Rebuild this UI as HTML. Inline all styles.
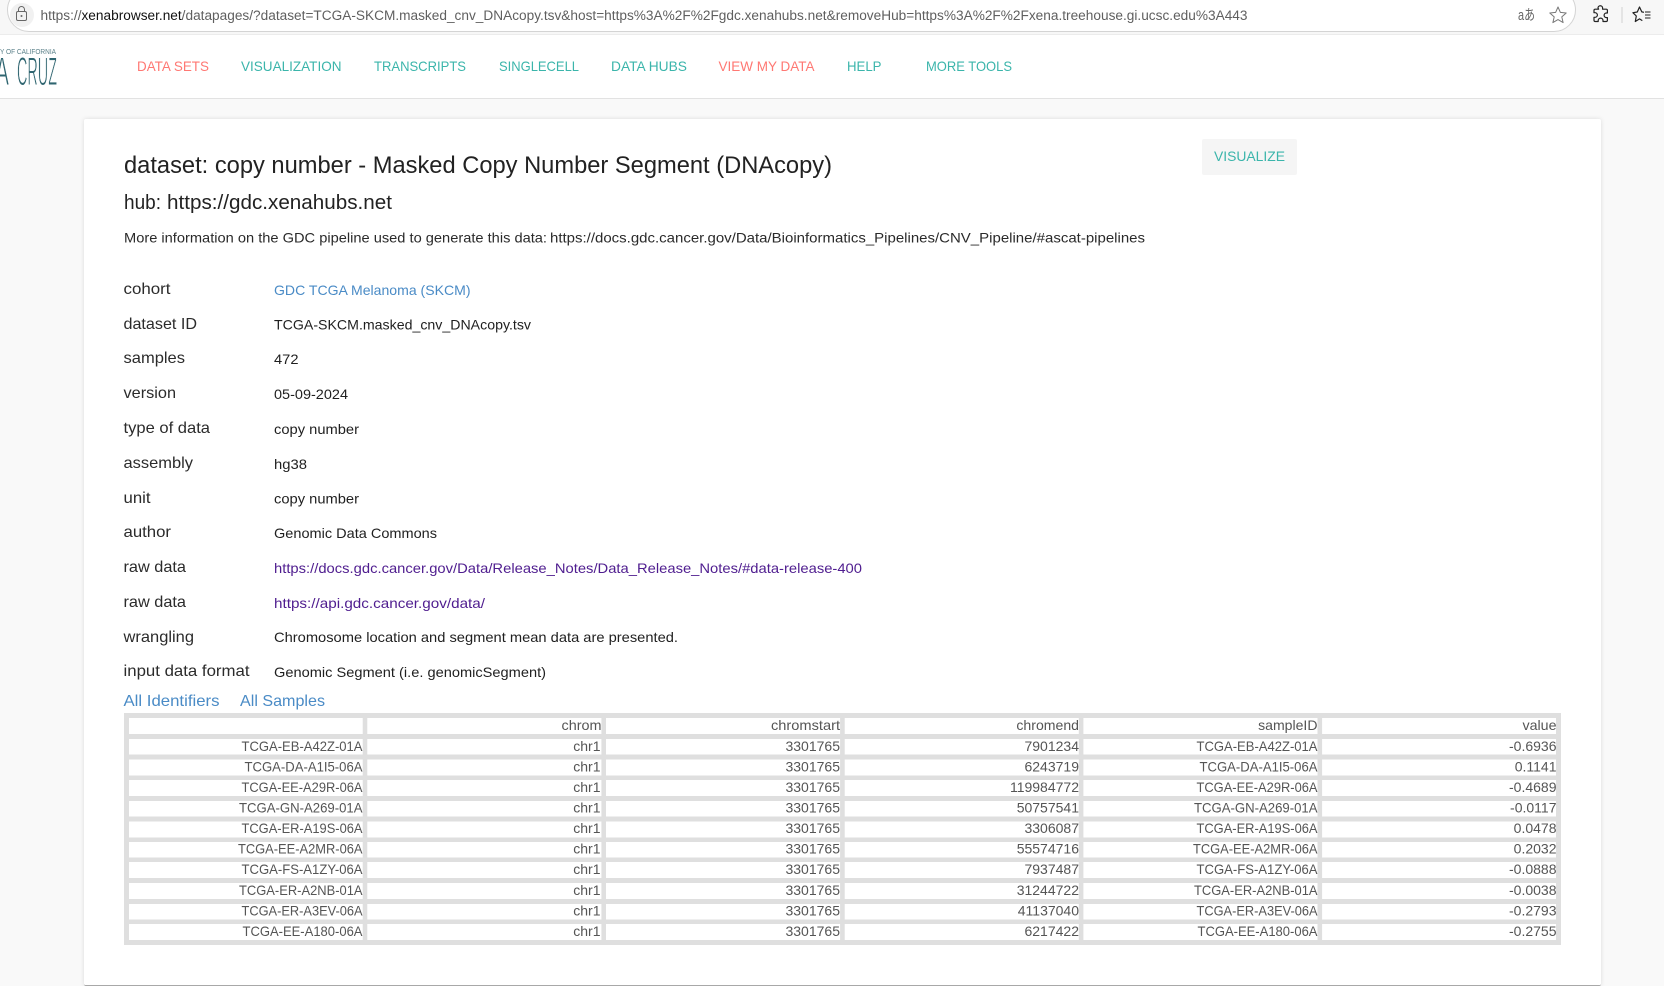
<!DOCTYPE html>
<html lang="en">
<head>
<meta charset="utf-8">
<title>Xena dataset</title>
<style>
html,body{margin:0;padding:0;width:1664px;height:986px;overflow:hidden;background:#f9f9f9}
#tb{position:absolute;left:0;top:0;width:1664px;height:34px;background:#f7f7f7;border-bottom:1px solid #ececec}
#omni{position:absolute;left:7px;top:-12px;width:1567px;height:42px;background:#fff;border:1px solid #d4d4d4;border-radius:22px}
#nav{position:absolute;left:0;top:35px;width:1664px;height:63px;background:#fff;border-bottom:1px solid #e2e2e2}
#card{position:absolute;left:84px;top:119px;width:1517px;height:866px;background:#fff;border-radius:2px;border-bottom:1px solid #a8a8a8;box-shadow:0 0 5px rgba(0,0,0,.12)}
#btn{position:absolute;left:1202px;top:139px;width:95px;height:36px;background:#f5f5f5;border-radius:2px}
svg{position:absolute;left:0;top:0}
text{font-family:"Liberation Sans","Noto Sans CJK JP",sans-serif;font-size:14px;fill:#222}
.n{fill:#3bb5ab}.c{fill:#ff7873}
.l{font-size:16px;fill:#2b2b2b}
.v{font-size:14px;fill:#1f1f1f}
.b{fill:#4a8bc6}.p{fill:#4f1d8f}
.t text{fill:#555;text-anchor:end}
.logo{font-size:40px;fill:#2f6570;stroke:#fff;stroke-width:.9px}
</style>
</head>
<body>
<div id="tb"></div><div id="omni"></div><div id="nav"></div><div id="card"></div><div id="btn"></div>
<svg width="1664" height="986" viewBox="0 0 1664 986" xmlns="http://www.w3.org/2000/svg">
<!-- browser chrome -->
<circle cx="22" cy="15" r="12" fill="#f1f1f1"/>
<g fill="none" stroke="#666" stroke-width="1">
<rect x="16.5" y="11.5" width="10" height="9" rx="1.5"/>
<path d="M18.5 11.5V9.5a3 3 0 0 1 6 0v2"/>
</g>
<circle cx="21.5" cy="16" r="1" fill="#666"/>
<text x="40.5" y="20" textLength="1207" lengthAdjust="spacingAndGlyphs" style="font-size:13.5px;fill:#5f5f5f">https://<tspan style="fill:#111">xenabrowser.net</tspan>/datapages/?dataset=TCGA-SKCM.masked_cnv_DNAcopy.tsv&amp;host=https%3A%2F%2Fgdc.xenahubs.net&amp;removeHub=https%3A%2F%2Fxena.treehouse.gi.ucsc.edu%3A443</text>
<text x="1518" y="20" style="font-size:14.5px;fill:#666" textLength="17" lengthAdjust="spacingAndGlyphs">aあ</text>
<path d="M1558 7l2.4 5.4 5.8.6-4.4 3.9 1.3 5.7-5.1-3-5.1 3 1.3-5.7-4.4-3.9 5.8-.6z" fill="none" stroke="#777" stroke-width="1" stroke-linejoin="round"/>
<path d="M1598 8.5a2.3 2.3 0 0 1 4.6 0v1.2h3.6a1.2 1.2 0 0 1 1.2 1.2v2.6h-1a2.3 2.3 0 0 0 0 4.6h1v2.7a1.2 1.2 0 0 1-1.2 1.2h-3.2v-1a2.4 2.4 0 0 0-4.8 0v1h-3a1.2 1.2 0 0 1-1.2-1.2v-3h1.1a2.3 2.3 0 0 0 0-4.6h-1.1v-2.3a1.2 1.2 0 0 1 1.2-1.2h3.4z" fill="none" stroke="#222" stroke-width="1.2" stroke-linejoin="round" transform="translate(0,-.5)"/>
<rect x="1621.5" y="7" width="1" height="16" fill="#d2d2d2"/>
<path d="M1644 12.3l-2.2-.4-2.3-4.9-2.2 5-4.4.7 3.4 3.3-1 5.5 4.2-2.6 2.8 1.7" fill="none" stroke="#222" stroke-width="1.2" stroke-linejoin="round"/>
<path d="M1645 12h5.5M1645 15h5.5M1645 18h5.5" stroke="#222" stroke-width="1.1"/>

<!-- logo -->
<text x="0" y="54" textLength="56" lengthAdjust="spacingAndGlyphs" style="font-size:7.5px;fill:#5b8089">Y OF CALIFORNIA</text>
<text class="logo" x="-5" y="85" textLength="14" lengthAdjust="spacingAndGlyphs">A</text>
<text class="logo" x="17" y="85" textLength="40" lengthAdjust="spacingAndGlyphs">CRUZ</text>

<!-- nav -->
<text class="c" x="137" y="71" textLength="72" lengthAdjust="spacingAndGlyphs">DATA SETS</text>
<text class="n" x="241" y="71" textLength="100.5" lengthAdjust="spacingAndGlyphs">VISUALIZATION</text>
<text class="n" x="374" y="71" textLength="92" lengthAdjust="spacingAndGlyphs">TRANSCRIPTS</text>
<text class="n" x="499" y="71" textLength="80" lengthAdjust="spacingAndGlyphs">SINGLECELL</text>
<text class="n" x="611" y="71" textLength="76" lengthAdjust="spacingAndGlyphs">DATA HUBS</text>
<text class="c" x="718.5" y="71" textLength="96" lengthAdjust="spacingAndGlyphs">VIEW MY DATA</text>
<text class="n" x="847" y="71" textLength="34.5" lengthAdjust="spacingAndGlyphs">HELP</text>
<text class="n" x="926" y="71" textLength="86" lengthAdjust="spacingAndGlyphs">MORE TOOLS</text>
<text class="n" x="1214" y="161" textLength="71" lengthAdjust="spacingAndGlyphs">VISUALIZE</text>

<!-- heading -->
<text x="124" y="173" textLength="708" lengthAdjust="spacingAndGlyphs" style="font-size:24px;fill:#222">dataset: copy number - Masked Copy Number Segment (DNAcopy)</text>
<text x="124" y="209" textLength="37" lengthAdjust="spacingAndGlyphs" style="font-size:20px;fill:#222">hub:</text>
<text x="167" y="209" textLength="225" lengthAdjust="spacingAndGlyphs" style="font-size:20px;fill:#222">https://gdc.xenahubs.net</text>
<text x="124" y="242.5" textLength="423" lengthAdjust="spacingAndGlyphs" style="fill:#2a2a2a">More information on the GDC pipeline used to generate this data:</text>
<text x="550" y="242.5" textLength="595" lengthAdjust="spacingAndGlyphs" style="fill:#2a2a2a">https://docs.gdc.cancer.gov/Data/Bioinformatics_Pipelines/CNV_Pipeline/#ascat-pipelines</text>

<!-- metadata labels -->
<text class="l" x="123.5" y="294" textLength="47" lengthAdjust="spacingAndGlyphs">cohort</text>
<text class="l" x="123.5" y="329" textLength="73.5" lengthAdjust="spacingAndGlyphs">dataset ID</text>
<text class="l" x="123.5" y="363" textLength="61.5" lengthAdjust="spacingAndGlyphs">samples</text>
<text class="l" x="123.5" y="398" textLength="52.5" lengthAdjust="spacingAndGlyphs">version</text>
<text class="l" x="123.5" y="433" textLength="86.5" lengthAdjust="spacingAndGlyphs">type of data</text>
<text class="l" x="123.5" y="468" textLength="69.5" lengthAdjust="spacingAndGlyphs">assembly</text>
<text class="l" x="123.5" y="503" textLength="27" lengthAdjust="spacingAndGlyphs">unit</text>
<text class="l" x="123.5" y="537" textLength="47.5" lengthAdjust="spacingAndGlyphs">author</text>
<text class="l" x="123.5" y="572" textLength="62.5" lengthAdjust="spacingAndGlyphs">raw data</text>
<text class="l" x="123.5" y="607" textLength="62.5" lengthAdjust="spacingAndGlyphs">raw data</text>
<text class="l" x="123.5" y="642" textLength="70.5" lengthAdjust="spacingAndGlyphs">wrangling</text>
<text class="l" x="123.5" y="676" textLength="126" lengthAdjust="spacingAndGlyphs">input data format</text>

<!-- metadata values -->
<text class="v b" x="274" y="295" textLength="196.5" lengthAdjust="spacingAndGlyphs">GDC TCGA Melanoma (SKCM)</text>
<text class="v" x="274" y="329.5" textLength="257" lengthAdjust="spacingAndGlyphs">TCGA-SKCM.masked_cnv_DNAcopy.tsv</text>
<text class="v" x="274" y="364" textLength="24.5" lengthAdjust="spacingAndGlyphs">472</text>
<text class="v" x="274" y="399" textLength="74" lengthAdjust="spacingAndGlyphs">05-09-2024</text>
<text class="v" x="274" y="434" textLength="85" lengthAdjust="spacingAndGlyphs">copy number</text>
<text class="v" x="274" y="469" textLength="33" lengthAdjust="spacingAndGlyphs">hg38</text>
<text class="v" x="274" y="503.5" textLength="85" lengthAdjust="spacingAndGlyphs">copy number</text>
<text class="v" x="274" y="538" textLength="163" lengthAdjust="spacingAndGlyphs">Genomic Data Commons</text>
<text class="v p" x="274" y="573" textLength="588" lengthAdjust="spacingAndGlyphs">https://docs.gdc.cancer.gov/Data/Release_Notes/Data_Release_Notes/#data-release-400</text>
<text class="v p" x="274" y="608" textLength="211" lengthAdjust="spacingAndGlyphs">https://api.gdc.cancer.gov/data/</text>
<text class="v" x="274" y="642" textLength="404" lengthAdjust="spacingAndGlyphs">Chromosome location and segment mean data are presented.</text>
<text class="v" x="274" y="677" textLength="272" lengthAdjust="spacingAndGlyphs">Genomic Segment (i.e. genomicSegment)</text>

<text class="b" x="123.5" y="706" textLength="96" lengthAdjust="spacingAndGlyphs" style="font-size:16px">All Identifiers</text>
<text class="b" x="240" y="706" textLength="85" lengthAdjust="spacingAndGlyphs" style="font-size:16px">All Samples</text>

<!-- table grid -->
<rect x="124" y="713" width="1437" height="232" fill="#dfdfdf"/>
<g fill="#fff">
<rect x="129" y="718" width="1427" height="16"/>
<rect x="129" y="739" width="1427" height="15.5"/>
<rect x="129" y="759.5" width="1427" height="16"/>
<rect x="129" y="780" width="1427" height="16"/>
<rect x="129" y="801" width="1427" height="15.5"/>
<rect x="129" y="821.5" width="1427" height="16"/>
<rect x="129" y="842" width="1427" height="15.5"/>
<rect x="129" y="862" width="1427" height="16"/>
<rect x="129" y="883" width="1427" height="16"/>
<rect x="129" y="904" width="1427" height="15.5"/>
<rect x="129" y="924" width="1427" height="16"/>
</g>
<g fill="#dfdfdf">
<rect x="362.7" y="713" width="4.6" height="232"/>
<rect x="601.4" y="713" width="4.6" height="232"/>
<rect x="840.1" y="713" width="4.6" height="232"/>
<rect x="1078.8" y="713" width="4.6" height="232"/>
<rect x="1317.5" y="713" width="4.6" height="232"/>
</g>
<g class="t">
<text x="601.5" y="730" textLength="40" lengthAdjust="spacingAndGlyphs">chrom</text><text x="840" y="730" textLength="69" lengthAdjust="spacingAndGlyphs">chromstart</text><text x="1079" y="730" textLength="62.6" lengthAdjust="spacingAndGlyphs">chromend</text><text x="1317.5" y="730" textLength="59.4" lengthAdjust="spacingAndGlyphs">sampleID</text><text x="1556.5" y="730" textLength="34" lengthAdjust="spacingAndGlyphs">value</text>

<text x="362.5" y="751" textLength="121" lengthAdjust="spacingAndGlyphs">TCGA-EB-A42Z-01A</text><text x="600.5" y="751">chr1</text><text x="840" y="751">3301765</text><text x="1079" y="751">7901234</text><text x="1317.5" y="751" textLength="121" lengthAdjust="spacingAndGlyphs">TCGA-EB-A42Z-01A</text><text x="1556.5" y="751">-0.6936</text>

<text x="362.5" y="771.5" textLength="118" lengthAdjust="spacingAndGlyphs">TCGA-DA-A1I5-06A</text><text x="600.5" y="771.5">chr1</text><text x="840" y="771.5">3301765</text><text x="1079" y="771.5">6243719</text><text x="1317.5" y="771.5" textLength="118" lengthAdjust="spacingAndGlyphs">TCGA-DA-A1I5-06A</text><text x="1556.5" y="771.5">0.1141</text>

<text x="362.5" y="792" textLength="121" lengthAdjust="spacingAndGlyphs">TCGA-EE-A29R-06A</text><text x="600.5" y="792">chr1</text><text x="840" y="792">3301765</text><text x="1079" y="792">119984772</text><text x="1317.5" y="792" textLength="121" lengthAdjust="spacingAndGlyphs">TCGA-EE-A29R-06A</text><text x="1556.5" y="792">-0.4689</text>

<text x="362.5" y="812.5" textLength="123.5" lengthAdjust="spacingAndGlyphs">TCGA-GN-A269-01A</text><text x="600.5" y="812.5">chr1</text><text x="840" y="812.5">3301765</text><text x="1079" y="812.5">50757541</text><text x="1317.5" y="812.5" textLength="123.5" lengthAdjust="spacingAndGlyphs">TCGA-GN-A269-01A</text><text x="1556.5" y="812.5">-0.0117</text>

<text x="362.5" y="833" textLength="121" lengthAdjust="spacingAndGlyphs">TCGA-ER-A19S-06A</text><text x="600.5" y="833">chr1</text><text x="840" y="833">3301765</text><text x="1079" y="833">3306087</text><text x="1317.5" y="833" textLength="121" lengthAdjust="spacingAndGlyphs">TCGA-ER-A19S-06A</text><text x="1556.5" y="833">0.0478</text>

<text x="362.5" y="853.5" textLength="124.5" lengthAdjust="spacingAndGlyphs">TCGA-EE-A2MR-06A</text><text x="600.5" y="853.5">chr1</text><text x="840" y="853.5">3301765</text><text x="1079" y="853.5">55574716</text><text x="1317.5" y="853.5" textLength="124.5" lengthAdjust="spacingAndGlyphs">TCGA-EE-A2MR-06A</text><text x="1556.5" y="853.5">0.2032</text>

<text x="362.5" y="874" textLength="121" lengthAdjust="spacingAndGlyphs">TCGA-FS-A1ZY-06A</text><text x="600.5" y="874">chr1</text><text x="840" y="874">3301765</text><text x="1079" y="874">7937487</text><text x="1317.5" y="874" textLength="121" lengthAdjust="spacingAndGlyphs">TCGA-FS-A1ZY-06A</text><text x="1556.5" y="874">-0.0888</text>

<text x="362.5" y="895" textLength="123.5" lengthAdjust="spacingAndGlyphs">TCGA-ER-A2NB-01A</text><text x="600.5" y="895">chr1</text><text x="840" y="895">3301765</text><text x="1079" y="895">31244722</text><text x="1317.5" y="895" textLength="123.5" lengthAdjust="spacingAndGlyphs">TCGA-ER-A2NB-01A</text><text x="1556.5" y="895">-0.0038</text>

<text x="362.5" y="915.5" textLength="121" lengthAdjust="spacingAndGlyphs">TCGA-ER-A3EV-06A</text><text x="600.5" y="915.5">chr1</text><text x="840" y="915.5">3301765</text><text x="1079" y="915.5">41137040</text><text x="1317.5" y="915.5" textLength="121" lengthAdjust="spacingAndGlyphs">TCGA-ER-A3EV-06A</text><text x="1556.5" y="915.5">-0.2793</text>

<text x="362.5" y="936" textLength="120" lengthAdjust="spacingAndGlyphs">TCGA-EE-A180-06A</text><text x="600.5" y="936">chr1</text><text x="840" y="936">3301765</text><text x="1079" y="936">6217422</text><text x="1317.5" y="936" textLength="120" lengthAdjust="spacingAndGlyphs">TCGA-EE-A180-06A</text><text x="1556.5" y="936">-0.2755</text>
</g>
</svg>
</body>
</html>
